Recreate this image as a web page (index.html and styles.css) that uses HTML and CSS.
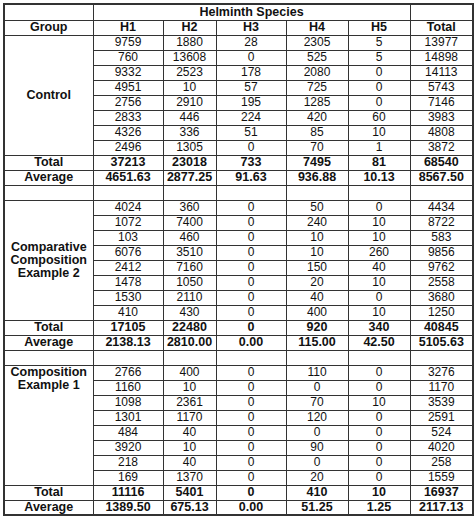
FILE: index.html
```html
<!DOCTYPE html>
<html>
<head>
<meta charset="utf-8">
<link rel="stylesheet" href="styles.css">
</head>
<body>
<table class="data">
  <colgroup>
    <col class="c-group"><col class="c-h1"><col class="c-h2"><col class="c-h3"><col class="c-h4"><col class="c-h5"><col class="c-total">
  </colgroup>
  <tr class="head"><td></td><td colspan="5">Helminth Species</td><td></td></tr>
  <tr class="head"><td>Group</td><td>H1</td><td>H2</td><td>H3</td><td>H4</td><td>H5</td><td>Total</td></tr>

  <tr><td class="grp" rowspan="8">Control</td><td>9759</td><td>1880</td><td>28</td><td>2305</td><td>5</td><td>13977</td></tr>
  <tr><td>760</td><td>13608</td><td>0</td><td>525</td><td>5</td><td>14898</td></tr>
  <tr><td>9332</td><td>2523</td><td>178</td><td>2080</td><td>0</td><td>14113</td></tr>
  <tr><td>4951</td><td>10</td><td>57</td><td>725</td><td>0</td><td>5743</td></tr>
  <tr><td>2756</td><td>2910</td><td>195</td><td>1285</td><td>0</td><td>7146</td></tr>
  <tr><td>2833</td><td>446</td><td>224</td><td>420</td><td>60</td><td>3983</td></tr>
  <tr><td>4326</td><td>336</td><td>51</td><td>85</td><td>10</td><td>4808</td></tr>
  <tr><td>2496</td><td>1305</td><td>0</td><td>70</td><td>1</td><td>3872</td></tr>
  <tr class="sum"><td>Total</td><td>37213</td><td>23018</td><td>733</td><td>7495</td><td>81</td><td>68540</td></tr>
  <tr class="sum"><td>Average</td><td>4651.63</td><td>2877.25</td><td>91.63</td><td>936.88</td><td>10.13</td><td>8567.50</td></tr>
  <tr class="blank"><td></td><td></td><td></td><td></td><td></td><td></td><td></td></tr>

  <tr><td class="grp" rowspan="8">Comparative<br>Composition<br>Example 2</td><td>4024</td><td>360</td><td>0</td><td>50</td><td>0</td><td>4434</td></tr>
  <tr><td>1072</td><td>7400</td><td>0</td><td>240</td><td>10</td><td>8722</td></tr>
  <tr><td>103</td><td>460</td><td>0</td><td>10</td><td>10</td><td>583</td></tr>
  <tr><td>6076</td><td>3510</td><td>0</td><td>10</td><td>260</td><td>9856</td></tr>
  <tr><td>2412</td><td>7160</td><td>0</td><td>150</td><td>40</td><td>9762</td></tr>
  <tr><td>1478</td><td>1050</td><td>0</td><td>20</td><td>10</td><td>2558</td></tr>
  <tr><td>1530</td><td>2110</td><td>0</td><td>40</td><td>0</td><td>3680</td></tr>
  <tr><td>410</td><td>430</td><td>0</td><td>400</td><td>10</td><td>1250</td></tr>
  <tr class="sum"><td>Total</td><td>17105</td><td>22480</td><td>0</td><td>920</td><td>340</td><td>40845</td></tr>
  <tr class="sum"><td>Average</td><td>2138.13</td><td>2810.00</td><td>0.00</td><td>115.00</td><td>42.50</td><td>5105.63</td></tr>
  <tr class="blank"><td></td><td></td><td></td><td></td><td></td><td></td><td></td></tr>

  <tr><td class="grp top" rowspan="8">Composition<br>Example 1</td><td>2766</td><td>400</td><td>0</td><td>110</td><td>0</td><td>3276</td></tr>
  <tr><td>1160</td><td>10</td><td>0</td><td>0</td><td>0</td><td>1170</td></tr>
  <tr><td>1098</td><td>2361</td><td>0</td><td>70</td><td>10</td><td>3539</td></tr>
  <tr><td>1301</td><td>1170</td><td>0</td><td>120</td><td>0</td><td>2591</td></tr>
  <tr><td>484</td><td>40</td><td>0</td><td>0</td><td>0</td><td>524</td></tr>
  <tr><td>3920</td><td>10</td><td>0</td><td>90</td><td>0</td><td>4020</td></tr>
  <tr><td>218</td><td>40</td><td>0</td><td>0</td><td>0</td><td>258</td></tr>
  <tr><td>169</td><td>1370</td><td>0</td><td>20</td><td>0</td><td>1559</td></tr>
  <tr class="sum"><td>Total</td><td>11116</td><td>5401</td><td>0</td><td>410</td><td>10</td><td>16937</td></tr>
  <tr class="sum"><td>Average</td><td>1389.50</td><td>675.13</td><td>0.00</td><td>51.25</td><td>1.25</td><td>2117.13</td></tr>
</table>
</body>
</html>
```

FILE: styles.css
```css
html, body {
  margin: 0;
  padding: 0;
  background: #ffffff;
}

body {
  padding: 3px 0 0 3px;
}

.data {
  border-collapse: collapse;
  table-layout: fixed;
  width: 469px;
  border: 2px solid #333333;
  font-family: "Liberation Sans", Arial, sans-serif;
  font-size: 12px;
  color: #111111;
}

.c-group { width: 89px; }
.c-h1 { width: 70px; }
.c-h2 { width: 53px; }
.c-h3 { width: 70px; }
.c-h4 { width: 62px; }
.c-h5 { width: 62px; }
.c-total { width: 63px; }

.data tr {
  height: 15px;
}

.data td {
  border: 1px solid #333333;
  padding: 0;
  text-align: center;
  vertical-align: middle;
  line-height: 13px;
  white-space: nowrap;
}

.data tr.head:first-child {
  height: 16px;
}

.head td,
.sum td,
.grp {
  font-weight: bold;
  font-size: 12.5px;
}

.grp {
  line-height: 15px;
}

.grp.top {
  vertical-align: top;
}
```
